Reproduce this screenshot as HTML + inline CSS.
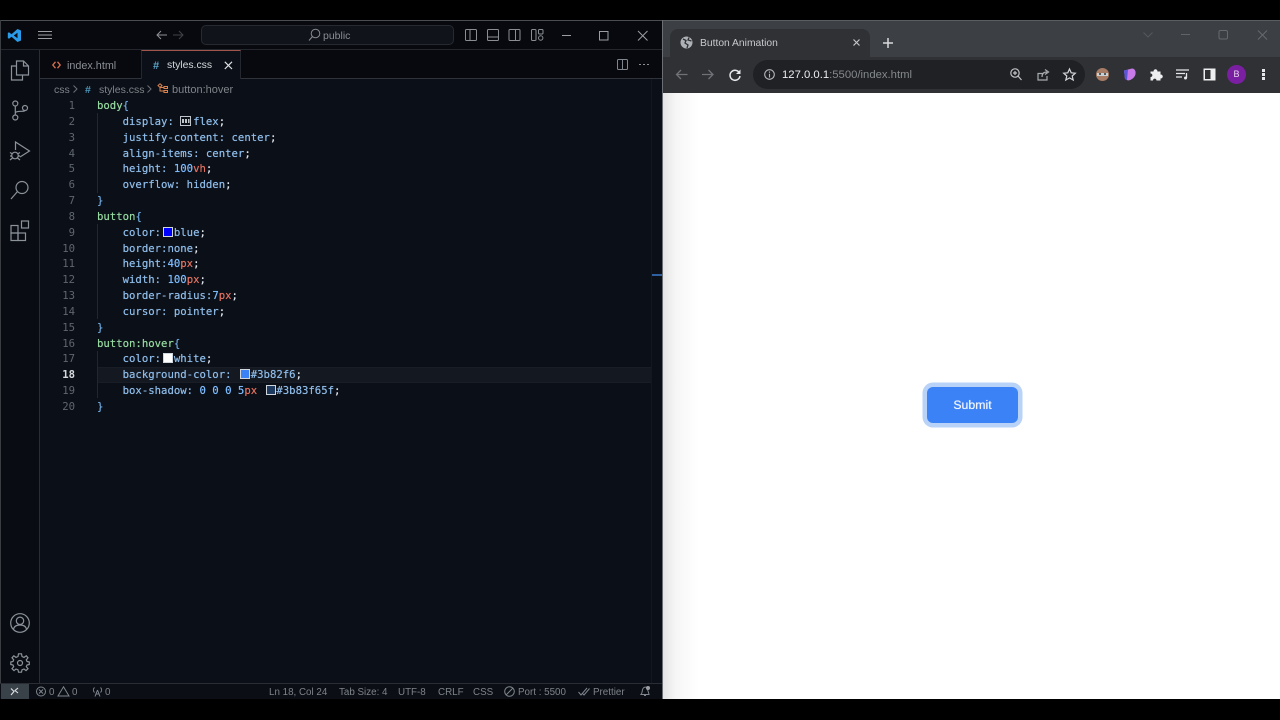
<!DOCTYPE html>
<html><head><meta charset="utf-8"><style>
html,body{margin:0;padding:0;width:1280px;height:720px;overflow:hidden;background:#000}
*{box-sizing:border-box}
.a{position:absolute}
.ui{font-family:"Liberation Sans",sans-serif;white-space:nowrap;position:absolute}
.sb{font-size:9.800px;line-height:13px;color:#7f848a;top:686px}
.code{position:absolute;left:97px;font:10.65px/15.84px "DejaVu Sans Mono","Liberation Mono",monospace;white-space:pre;color:#8dbbe8;text-shadow:0 0 .5px currentColor}
.ln{position:absolute;left:50px;width:25px;text-align:right;font:10.65px/15.84px "DejaVu Sans Mono",monospace;color:#5f6670}
.g{color:#95d8a0}.n{color:#7dbcff}.r{color:#e0705f}.w{color:#dfe6ee}.b{color:#6fa8dc}
.sw{display:inline-block;position:absolute;width:10px;height:10px;border:1px solid #cfd6de}
svg{position:absolute;overflow:visible}
.st{fill:none;stroke:#8b929a;stroke-width:1.2}
.s2{fill:none;stroke:#7f868e;stroke-width:1}
</style></head><body>
<div class="a" style="left:0;top:20px;width:1280px;height:679px;background:#0b0f17"></div>
<!-- VS Code top -->
<div class="a" style="left:0;top:20px;width:662px;height:1px;background:#4a4d52"></div>
<div class="a" style="left:0;top:21px;width:662px;height:28px;background:#08090e"></div>
<div class="a" style="left:0;top:49px;width:662px;height:1px;background:#24272d"></div>
<div class="a" style="left:40px;top:50px;width:622px;height:29px;background:#08090e"></div>
<div class="a" style="left:40px;top:78px;width:622px;height:1px;background:#30343a"></div>
<div class="a" style="left:0;top:50px;width:40px;height:633px;background:#0a0c13"></div>
<div class="a" style="left:39px;top:50px;width:1px;height:633px;background:#2a2d34"></div>
<div class="a" style="left:0;top:20px;width:1px;height:679px;background:#3a3d42"></div>
<!-- logo -->
<svg style="left:7px;top:28px" width="15" height="15" viewBox="0 0 15 15"><path d="M10.5 1L14 2.5V12.500L10.500 14L4.500 8.800L2 10.800L.8 10V5L2 4.200L4.500 6.200ZM10.500 4.800L6.800 7.500L10.500 10.200Z" fill="#2a9be8"/></svg>
<svg style="left:38px;top:31px" width="14" height="8"><path d="M0 .5H14M0 4H14M0 7.500H14" stroke="#9a9ea4" stroke-width="1"/></svg>
<svg style="left:156px;top:30px" width="36" height="10"><path d="M11 5H1M5 1L1 5L5 9" fill="none" stroke="#8d9197" stroke-width="1"/><path d="M17 5H27M23 1L27 5L23 9" fill="none" stroke="#3f4247" stroke-width="1"/></svg>
<div class="a" style="left:201px;top:25px;width:253px;height:20px;background:#10131a;border:1px solid #272a30;border-radius:5px"></div>
<svg style="left:308px;top:28px" width="13" height="14"><circle cx="7.500" cy="5.500" r="4.300" fill="none" stroke="#868a90"/><path d="M4.500 8.500L1 12.500" stroke="#868a90"/></svg>
<div class="ui" style="left:323px;top:29px;font-size:10.500px;line-height:14px;color:#888d93">public</div>
<svg style="left:465px;top:29px" width="85" height="12"><g fill="none" stroke="#8a8e94"><rect x=".5" y=".5" width="11" height="11" rx="1"/><path d="M5 .5V11.500"/><rect x="22.500" y=".5" width="11" height="11" rx="1"/><path d="M22.500 8H33.500"/><rect x="44" y=".5" width="11" height="11" rx="1"/><path d="M50.500 .5V11.500"/><rect x="66.500" y=".5" width="4.500" height="11" rx="1"/><rect x="73.500" y=".5" width="4.500" height="4.500" rx="1"/><circle cx="75.700" cy="9" r="2.200"/></g></svg>
<svg style="left:562px;top:30px" width="90" height="11"><g fill="none" stroke="#9a9ea3"><path d="M0 5.500H9"/><rect x="37.500" y="1.500" width="8.500" height="8.500"/><path d="M76 1L85.500 10.500M85.500 1L76 10.500"/></g></svg>
<!-- tabs -->
<div class="a" style="left:141px;top:50px;width:100px;height:29px;background:#0b0f17;border-top:1px solid #a0564c;border-left:1px solid #24272d;border-right:1px solid #24272d"></div>
<svg style="left:52px;top:61px" width="9" height="8"><path d="M3.500 .8L.8 4L3.500 7.200M5.500 .8L8.200 4L5.500 7.200" fill="none" stroke="#d8734f" stroke-width="1.300"/></svg>
<div class="ui" style="left:67px;top:59px;font-size:10.800px;line-height:14px;color:#8a8f95">index.html</div>
<div class="ui" style="left:153px;top:59px;font-size:11px;line-height:14px;font-weight:bold;color:#5aa5c9">#</div>
<div class="ui" style="left:167px;top:59px;font-size:10.400px;line-height:14px;color:#d6dade">styles.css</div>
<svg style="left:224px;top:61px" width="9" height="9"><path d="M.8.8L8 8M8 .8L.8 8" stroke="#e0e2e5" stroke-width="1.200"/></svg>
<svg style="left:617px;top:59px" width="11" height="11"><rect x=".5" y=".5" width="10" height="10" rx="1" class="s2"/><path d="M5.500 .5V10.500" class="s2"/></svg>
<div class="a" style="left:639px;top:64px;width:2px;height:1px;background:#8b8f94;box-shadow:4px 0 #8b8f94,8px 0 #8b8f94"></div>
<!-- breadcrumb -->
<div class="ui" style="left:54px;top:83px;font-size:10.500px;line-height:14px;color:#7f848a">css</div>
<svg style="left:73px;top:85px" width="5" height="8"><path d="M.5.5L4 4L.5 7.500" fill="none" stroke="#6c7177"/></svg>
<div class="ui" style="left:85px;top:83px;font-size:10.500px;line-height:14px;font-weight:bold;color:#4d96ba">#</div>
<div class="ui" style="left:99px;top:83px;font-size:10.500px;line-height:14px;color:#7f848a">styles.css</div>
<svg style="left:147px;top:85px" width="5" height="8"><path d="M.5.5L4 4L.5 7.500" fill="none" stroke="#6c7177"/></svg>
<svg style="left:157px;top:83px" width="12" height="11"><path d="M1 2.500L3 .8L5 2.500L3 4.500ZM3 4.500V8H7M3 4.500H7M7 3.500H10.500V5.500H7ZM7 7.500H10.500V9.500H7Z" fill="none" stroke="#d8834f"/></svg>
<div class="ui" style="left:172px;top:83px;font-size:11px;line-height:14px;color:#7f848a">button:hover</div>
<!-- activity icons -->
<svg style="left:10px;top:60px" width="20" height="21"><path class="st" d="M6.500 6H1.500V20H12.500V15M6.500 1H13.500L18.500 6V15H6.500ZM13.500 1V6H18.500"/></svg>
<svg style="left:11px;top:100px" width="18" height="21"><g class="st"><circle cx="4.300" cy="3.500" r="2.500"/><circle cx="4.300" cy="17.500" r="2.500"/><circle cx="14" cy="8" r="2.500"/><path d="M4.300 6V15M4.300 13C4.300 10.500 14 12 14 10.500"/></g></svg>
<svg style="left:9px;top:140px" width="22" height="22"><g class="st"><path d="M6.500 10V2L20.500 11L11 17"/><circle cx="6" cy="15.500" r="3.300"/><path d="M1 12.500L3.500 14M1 16H3M1 20L3.500 18M11 12.500L8.500 14M11 16H9M11 20L8.500 18"/></g></svg>
<svg style="left:10px;top:180px" width="20" height="20"><g class="st"><circle cx="12" cy="7.500" r="6"/><path d="M7.500 11.500L1 19"/></g></svg>
<svg style="left:10px;top:220px" width="20" height="22"><g class="st"><rect x="1" y="5.500" width="7" height="7.500"/><rect x="1" y="13" width="7" height="7.500"/><rect x="8" y="13" width="7.500" height="7.500"/><rect x="11.500" y="1" width="7" height="7"/></g></svg>
<svg style="left:10px;top:613px" width="20" height="20"><g class="st"><circle cx="10" cy="10" r="9.300"/><circle cx="10" cy="7.800" r="3.700"/><path d="M3.500 16.500C4 13 7 12 10 12C13 12 16 13 16.500 16.500"/></g></svg>
<svg style="left:10px;top:653px" width="20" height="20" viewBox="0 0 20 20"><g class="st"><circle cx="10" cy="10" r="2.500"/><path d="M8.500 .8H11.500L12 3.500L14 4.400L16.300 2.800L18 4.800L16.300 6.800L17 8.500L19.300 9V11.500L17 12L16.300 13.700L18 15.700L16 17.600L14 16L12 16.800L11.500 19.200H8.500L8 16.800L6 16L4 17.600L2 15.700L3.700 13.700L3 12L.8 11.500V9L3 8.500L3.700 6.800L2 4.800L3.800 2.800L6 4.400L8 3.500Z"/></g></svg>
<!-- code -->
<div class="a" style="left:97px;top:367px;width:554px;height:16px;background:#141820;border:1px solid #191d25;border-right:none"></div>
<div class="a" style="left:97px;top:113px;width:1px;height:80px;background:#22262d"></div>
<div class="a" style="left:97px;top:224px;width:1px;height:95px;background:#22262d"></div>
<div class="a" style="left:97px;top:351px;width:1px;height:47px;background:#22262d"></div>
<div class="a" style="left:651px;top:79px;width:1px;height:604px;background:#14171e"></div>
<div class="a" style="left:652px;top:274px;width:10px;height:2px;background:#2f5f9e"></div>
<div class="ln" style="top:98px">1</div><div class="code" style="top:98px"><span class="g">body</span><span class="b">{</span></div>
<div class="ln" style="top:114px">2</div><div class="code" style="top:114px">    display:   flex<span class="w">;</span></div>
<svg style="left:180px;top:116px" width="11" height="10"><rect x=".5" y=".5" width="10" height="9" fill="none" stroke="#bfc5cb"/><rect x="2" y="3" width="2" height="4" fill="#bfc5cb"/><rect x="5" y="3" width="2" height="4" fill="#bfc5cb"/><rect x="8" y="3" width="1.500" height="4" fill="#bfc5cb"/></svg>
<div class="ln" style="top:130px">3</div><div class="code" style="top:130px">    justify-content: center<span class="w">;</span></div>
<div class="ln" style="top:146px">4</div><div class="code" style="top:146px">    align-items: center<span class="w">;</span></div>
<div class="ln" style="top:161px">5</div><div class="code" style="top:161px">    height: <span class="n">100</span><span class="r">vh</span><span class="w">;</span></div>
<div class="ln" style="top:177px">6</div><div class="code" style="top:177px">    overflow: hidden<span class="w">;</span></div>
<div class="ln" style="top:193px">7</div><div class="code" style="top:193px"><span class="b">}</span></div>
<div class="ln" style="top:209px">8</div><div class="code" style="top:209px"><span class="g">button</span><span class="b">{</span></div>
<div class="ln" style="top:225px">9</div><div class="code" style="top:225px">    color:  blue<span class="w">;</span></div>
<span class="sw" style="left:163px;top:227px;background:#0000ff"></span>
<div class="ln" style="top:241px">10</div><div class="code" style="top:241px">    border:none<span class="w">;</span></div>
<div class="ln" style="top:256px">11</div><div class="code" style="top:256px">    height:<span class="n">40</span><span class="r">px</span><span class="w">;</span></div>
<div class="ln" style="top:272px">12</div><div class="code" style="top:272px">    width: <span class="n">100</span><span class="r">px</span><span class="w">;</span></div>
<div class="ln" style="top:288px">13</div><div class="code" style="top:288px">    border-radius:<span class="n">7</span><span class="r">px</span><span class="w">;</span></div>
<div class="ln" style="top:304px">14</div><div class="code" style="top:304px">    cursor: pointer<span class="w">;</span></div>
<div class="ln" style="top:320px">15</div><div class="code" style="top:320px"><span class="b">}</span></div>
<div class="ln" style="top:336px">16</div><div class="code" style="top:336px"><span class="g">button:hover</span><span class="b">{</span></div>
<div class="ln" style="top:351px">17</div><div class="code" style="top:351px">    color:  white<span class="w">;</span></div>
<span class="sw" style="left:163px;top:353px;background:#fff"></span>
<div class="ln" style="top:367px;color:#d5d9de;font-weight:bold">18</div><div class="code" style="top:367px">    background-color:   #3b82f6<span class="w">;</span></div>
<span class="sw" style="left:240px;top:369px;background:#3b82f6"></span>
<div class="ln" style="top:383px">19</div><div class="code" style="top:383px">    box-shadow: <span class="n">0 0 0 5</span><span class="r">px</span>   #3b83f65f<span class="w">;</span></div>
<span class="sw" style="left:266px;top:385px;background:#1e3a5f"></span>
<div class="ln" style="top:399px">20</div><div class="code" style="top:399px"><span class="b">}</span></div>
<!-- status bar -->
<div class="a" style="left:0;top:683px;width:662px;height:16px;background:#0b0e15;border-top:1px solid #2a2d33"></div>
<div class="a" style="left:1px;top:684px;width:28px;height:15px;background:#3a4249"></div>
<svg style="left:10px;top:687px" width="9" height="9"><path d="M1 1.500L4 4.500L1 8M8 1L5 3.500L8 6" fill="none" stroke="#dfe3e6" stroke-width="1.100"/></svg>
<svg style="left:36px;top:686px" width="36" height="11"><circle cx="5" cy="5.500" r="4.500" class="s2"/><path d="M3 3.500L7 7.500M7 3.500L3 7.500" class="s2"/><path d="M27.500 .8L33 10H22Z" class="s2"/></svg>
<div class="ui sb" style="left:49px">0</div>
<div class="ui sb" style="left:72px">0</div>
<svg style="left:92px;top:686px" width="11" height="11"><path d="M5.500 4L3 10.500M5.500 4L8 10.500M3.500 8H7.500M2.500 1.500C1 3 1 5 2.500 6.500M8.500 1.500C10 3 10 5 8.500 6.500" class="s2"/></svg>
<div class="ui sb" style="left:105px">0</div>
<div class="ui sb" style="left:269px">Ln 18, Col 24</div>
<div class="ui sb" style="left:339px">Tab Size: 4</div>
<div class="ui sb" style="left:398px">UTF-8</div>
<div class="ui sb" style="left:438px">CRLF</div>
<div class="ui sb" style="left:473px">CSS</div>
<svg style="left:504px;top:686px" width="11" height="11"><circle cx="5.500" cy="5.500" r="4.800" class="s2"/><path d="M2.200 8.800L8.800 2.200" class="s2"/></svg>
<div class="ui sb" style="left:518px">Port : 5500</div>
<svg style="left:578px;top:687px" width="12" height="9"><path d="M.5 5L3 8L9 1M4 6L6 8L11.500 1.500" class="s2"/></svg>
<div class="ui sb" style="left:593px">Prettier</div>
<svg style="left:639px;top:685px" width="12" height="12"><path d="M2 9.500C3.500 8 3 5 4 3.500C5 2 7 1.500 8 3L9.500 7.500L10 9.500H2ZM5 10.500H7" class="s2"/><circle cx="9" cy="3" r="2" fill="#9a9ea3"/></svg>
<!-- Chrome -->
<div class="a" style="left:662px;top:20px;width:1px;height:679px;background:#6b6e72"></div>
<div class="a" style="left:663px;top:20px;width:617px;height:1px;background:#5a5d61"></div>
<div class="a" style="left:663px;top:21px;width:617px;height:36px;background:#3c3f43"></div>
<div class="a" style="left:663px;top:57px;width:617px;height:36px;background:#2f3135"></div>
<div class="a" style="left:670px;top:29px;width:200px;height:28px;background:#2f3135;border-radius:8px 8px 0 0"></div>
<svg style="left:680px;top:36px" width="13" height="13"><circle cx="6.500" cy="6.500" r="6" fill="#aeb1b5"/><path d="M3 3L6 4.500L5 7L8 9L7 12M9 1.500L8 4L11.500 5" fill="none" stroke="#2f3135" stroke-width="1.300"/></svg>
<div class="ui" style="left:700px;top:37px;font-size:10.300px;line-height:14px;color:#c8cacd">Button Animation</div>
<svg style="left:853px;top:39px" width="7" height="7"><path d="M.5.5L6.500 6.500M6.500 .5L.5 6.500" stroke="#c4c6c9" stroke-width="1.200"/></svg>
<svg style="left:883px;top:38px" width="10" height="10"><path d="M5 0V10M0 5H10" stroke="#d8dadc" stroke-width="1.500"/></svg>
<svg style="left:1143px;top:30px" width="125" height="10"><g fill="none" stroke-width="1"><path d="M.5 2.500L5 7L9.500 2.500" stroke="#55585c"/><path d="M38 4.500H47" stroke="#606367"/><rect x="76" y=".5" width="8.500" height="8.500" rx="1.500" stroke="#66696d"/><path d="M115 .5L124 9.500M124 .5L115 9.500" stroke="#66696d"/></g></svg>
<svg style="left:675px;top:68px" width="66" height="13"><path d="M12.500 6.500H1.500M6 2L1.500 6.500L6 11" fill="none" stroke="#6f7276" stroke-width="1.300"/><path d="M27 6.500H38M33.500 2L38 6.500L33.500 11" fill="none" stroke="#6f7276" stroke-width="1.300"/><path d="M64.500 5A5 5 0 1 0 65 8" fill="none" stroke="#e6e7e9" stroke-width="1.500"/><path d="M65.500 1.500V6H61Z" fill="#e6e7e9"/></svg>
<div class="a" style="left:753px;top:60px;width:332px;height:29px;border-radius:15px;background:#1f2124"></div>
<svg style="left:764px;top:69px" width="11" height="11"><circle cx="5.500" cy="5.500" r="4.800" fill="none" stroke="#b4b6b9" stroke-width="1.100"/><path d="M5.500 4.800V8.500M5.500 2.500V3.700" stroke="#b4b6b9" stroke-width="1.100"/></svg>
<div class="ui" style="left:782px;top:68px;font-size:11.300px;line-height:15px;color:#85888c"><span style="color:#eceef0">127.0.0.1</span>:5500/index.html</div>
<svg style="left:1010px;top:68px" width="68" height="13"><g fill="none" stroke="#c0c2c5" stroke-width="1.200"><circle cx="5" cy="5" r="4.200"/><path d="M8 8L11.500 12M3 5H7M5 3V7"/><path d="M33 5.500H28V12H37V8M32 9C32 5.500 34 4 37 4M35 1.500L38.500 4L35 6.500" stroke="#a8abae"/><path stroke="#d4d6d8" d="M59.500 1L61.200 4.800L65.300 5.200L62.200 8L63.200 12L59.500 9.900L55.800 12L56.800 8L53.700 5.200L57.800 4.800Z"/></g></svg>
<svg style="left:1095px;top:67px" width="15" height="15"><circle cx="7.500" cy="7.500" r="6.500" fill="#a97d65"/><rect x="2" y="6" width="11" height="3" fill="#c8d2d6"/><circle cx="5" cy="7" r="1" fill="#333"/><circle cx="10" cy="7" r="1" fill="#333"/></svg>
<svg style="left:1123px;top:68px" width="13" height="13"><path d="M1 2.500L9 .5C12 .5 13 3.500 12.500 6C12 9 9 12 5 12.500L2 11Z" fill="#c77ae8"/><path d="M1 2.500L5 1.500L4 12L2 11Z" fill="#5a55d8"/></svg>
<svg style="left:1150px;top:68px" width="13" height="13"><path d="M.5 3.500H3.500C3.500 .5 7.500 .5 7.500 3.500H10.500V6.500C13.500 6.500 13.500 10.500 10.500 10.500V12.500H6.500C6.500 10 3 10 3 12.500H.5V9C3 9 3 5.500 .5 5.500Z" fill="#eceef0"/></svg>
<svg style="left:1176px;top:69px" width="14" height="11"><path d="M0 1H13M0 4.500H9M0 8H6" stroke="#e6e7e9" stroke-width="1.300"/><path d="M10.500 4V9" stroke="#e6e7e9" stroke-width="1.300"/><circle cx="9.500" cy="9" r="1.500" fill="#e6e7e9"/></svg>
<svg style="left:1203px;top:68px" width="13" height="13"><rect width="12" height="12" x=".5" y=".5" fill="#eceef0"/><rect x="2" y="2" width="5.500" height="9" fill="#2f3135"/></svg>
<div class="a" style="left:1227px;top:65px;width:19px;height:19px;border-radius:50%;background:#7a1fa2"></div>
<div class="ui" style="left:1227px;top:68px;width:19px;text-align:center;font-size:9px;line-height:13px;color:#e8d5ee">B</div>
<div class="a" style="left:1262px;top:69px;width:2.500px;height:2.500px;background:#e6e7e9;box-shadow:0 4px #e6e7e9,0 8px #e6e7e9"></div>
<!-- page -->
<div class="a" style="left:663px;top:93px;width:617px;height:606px;background:#fff"></div>
<div class="a" style="left:663px;top:93px;width:36px;height:606px;background:linear-gradient(90deg,#e4e4e4,#f6f6f6 35%,#fff)"></div>
<div class="a" style="left:927px;top:387px;width:91px;height:36px;border-radius:6px;background:#3b82f6;box-shadow:0 0 0 4.500px #b9d2f7"></div>
<div class="ui" style="left:927px;top:398px;width:91px;text-align:center;font-size:12.300px;line-height:15px;color:#f2f6ff;text-shadow:0 0 .6px #f2f6ff">Submit</div>
<div class="a" style="left:0;top:699px;width:1280px;height:21px;background:#000"></div>
</body></html>
